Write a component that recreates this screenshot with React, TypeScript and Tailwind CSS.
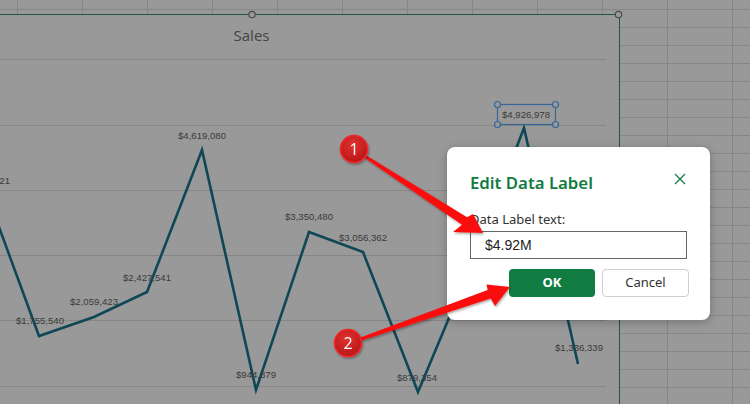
import React from 'react'

// dimmed spreadsheet behind a modal, with a line chart and two callouts
const points: [number, number][] = [
  [-15, 189],
  [39, 336],
  [94, 317],
  [147, 292],
  [202, 150],
  [256, 390],
  [309, 232],
  [363, 252],
  [418, 392],
  [472, 263],
  [524, 128],
  [578, 364],
]

const labels = [
  { text: '21', x: 10, y: 180, anchor: 'end' },
  { text: '$1,755,540', x: 40, y: 320, anchor: 'middle' },
  { text: '$2,059,423', x: 94, y: 301, anchor: 'middle' },
  { text: '$2,427,541', x: 147, y: 277, anchor: 'middle' },
  { text: '$4,619,080', x: 202, y: 135, anchor: 'middle' },
  { text: '$944,879', x: 256, y: 374, anchor: 'middle' },
  { text: '$3,350,480', x: 309, y: 216, anchor: 'middle' },
  { text: '$3,056,362', x: 363, y: 237, anchor: 'middle' },
  { text: '$879,354', x: 417, y: 377, anchor: 'middle' },
  { text: '$1,336,339', x: 579, y: 347, anchor: 'middle' },
]

const gridY = [59, 125, 190, 255, 320, 386]

const cells = Array.from({ length: 13 * 23 }, (_, i) => i)

const SheetGrid: React.FC = () => (
  <div className="grid grid-cols-[18px_repeat(12,65px)] grid-rows-[10px_repeat(22,18px)]">
    {cells.map((i) => (
      <div key={i} className="border-r border-b border-[#868686]" />
    ))}
  </div>
)

const ChartArt: React.FC = () => (
  <svg className="absolute inset-0" width={750} height={404} viewBox="0 0 750 404">
    {gridY.map((y) => (
      <line key={y} x1={0} x2={606} y1={y + 0.5} y2={y + 0.5} stroke="#868686" strokeWidth={1} />
    ))}
    <polyline
      points={points.map((p) => p.join(',')).join(' ')}
      fill="none"
      stroke="#0f4757"
      strokeWidth={2.6}
      strokeLinejoin="miter"
    />
    <g fontFamily="'Liberation Sans', Arial, sans-serif" fontSize={9.6} fill="#3a3a3a">
      {labels.map((l) => (
        <text key={l.text} x={l.x} y={l.y + 3.5} textAnchor={l.anchor as 'end' | 'middle'}>
          {l.text}
        </text>
      ))}
      <text x={526} y={117.5} textAnchor="middle">
        $4,926,978
      </text>
    </g>
    {/* selected label frame */}
    <rect x={497.5} y={104.5} width={58} height={20} fill="none" stroke="#33679a" strokeWidth={1.2} />
    {[
      [497.5, 104.5],
      [555.5, 104.5],
      [497.5, 124.5],
      [555.5, 124.5],
    ].map(([cx, cy]) => (
      <circle key={`${cx}-${cy}`} cx={cx} cy={cy} r={3} fill="#999" stroke="#33679a" strokeWidth={1.2} />
    ))}
    {/* chart frame handles */}
    <circle cx={252} cy={14.5} r={3.2} fill="#999" stroke="#4a4a4a" strokeWidth={1.2} />
    <circle cx={618.5} cy={14.5} r={3.2} fill="#999" stroke="#4a4a4a" strokeWidth={1.2} />
  </svg>
)

const Callouts: React.FC = () => (
  <svg className="pointer-events-none absolute inset-0" width={750} height={404} viewBox="0 0 750 404">
    <defs>
      <radialGradient id="badge" cx="45%" cy="35%" r="70%">
        <stop offset="0%" stopColor="#e23232" />
        <stop offset="100%" stopColor="#b51515" />
      </radialGradient>
      <filter id="soft" x="-30%" y="-30%" width="160%" height="160%">
        <feDropShadow dx="1" dy="1.5" stdDeviation="1.2" floodColor="#000" floodOpacity="0.35" />
      </filter>
    </defs>
    <g fill="#fa0d0d" filter="url(#soft)">
      <polygon points="366.8,155.7 467,217.2 473,214 483,233 453,232 462,224.8 365.2,158.3" />
      <polygon points="360.5,337.6 487.7,290.1 486.5,284.5 510,287 495,306 490.7,298.5 361.5,340.4" />
    </g>
    {[
      { n: '1', cx: 354, cy: 149 },
      { n: '2', cx: 348, cy: 343 },
    ].map((b) => (
      <g key={b.n} filter="url(#soft)">
        <circle cx={b.cx} cy={b.cy} r={13.5} fill="url(#badge)" stroke="#f22525" strokeWidth={1.6} />
        <text
          x={b.cx}
          y={b.cy + 5.5}
          textAnchor="middle"
          fontSize={16}
          fill="#fff"
          fontFamily="'Open Sans', sans-serif"
        >
          {b.n}
        </text>
      </g>
    ))}
  </svg>
)

const EditDialog: React.FC = () => (
  <div className="absolute left-[447px] top-[147px] h-[173px] w-[263px] rounded-[8px] bg-white px-[23px] pt-[24px] shadow-[0_2px_10px_rgba(0,0,0,0.25)] font-['Noto_Sans','Open_Sans',sans-serif]">
    <div className="flex h-[24px] items-center justify-between">
      <h2 className="text-[16.8px] font-semibold leading-[24px] text-[#107c41]">Edit Data Label</h2>
      <svg width={12} height={12} viewBox="0 0 12 12" className="mr-[1px] mt-[-8px]">
        <path d="M1 1 L11 11 M11 1 L1 11" stroke="#107c41" strokeWidth={1.2} fill="none" />
      </svg>
    </div>
    <p className="mt-[15px] text-[13px] leading-[18px] text-[#333]">Data Label text:</p>
    <div className="mt-[3px] flex h-[28px] items-center border border-[#666] pl-[14px] text-[14px] text-[#222] font-['Liberation_Sans',Arial,sans-serif]">
      $4.92M
    </div>
    <div className="mr-[-2px] mt-[10px] flex justify-end gap-[7px]">
      <button
        type="button"
        className="h-[28px] w-[86px] rounded-[4px] bg-[#107c41] text-[13px] font-bold text-white"
      >
        OK
      </button>
      <button
        type="button"
        className="h-[28px] w-[87px] rounded-[4px] border border-[#cfcfcf] bg-white text-[13px] text-[#333]"
      >
        Cancel
      </button>
    </div>
  </div>
)

const App: React.FC = () => {
  return (
    <div className="relative h-[404px] w-[750px] overflow-hidden bg-[#999]">
      <SheetGrid />
      <div className="absolute left-[-116px] top-[14px] flex h-[400px] w-[736px] flex-col items-center border-t border-r border-[#22573d] bg-[#999] pt-[10px]">
        <span className="text-[15px] leading-[20px] text-[#454545] font-['Open_Sans',sans-serif]">Sales</span>
      </div>
      <ChartArt />
      <EditDialog />
      <Callouts />
    </div>
  )
}

export default App
